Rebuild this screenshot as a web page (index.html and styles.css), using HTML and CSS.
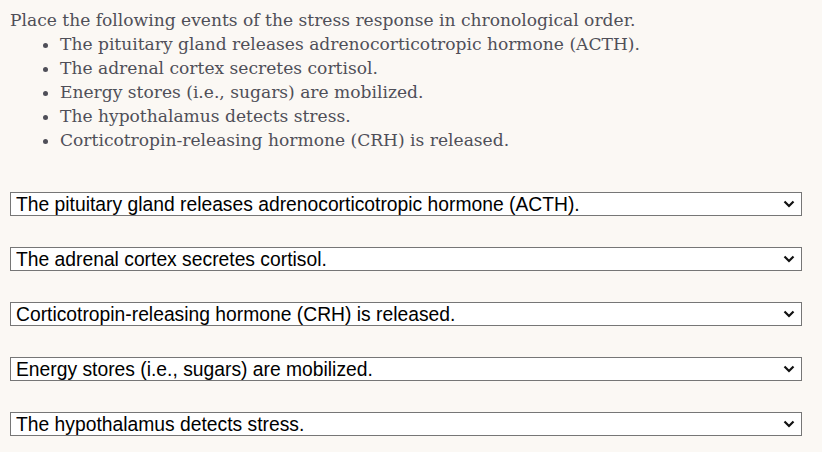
FILE: index.html
```html
<!DOCTYPE html>
<html lang="en">

<head>
  <meta charset="UTF-8" />
  <meta name="viewport" content="width=device-width, initial-scale=1.0" />
  <title>Stress response order</title>
  <link rel="stylesheet" href="styles.css">
</head>

<body>
  <div class="question">
    <div class="prompt">
      Place the following events of the stress response in chronological order.
      <ul class="events">
        <li>The pituitary gland releases adrenocorticotropic hormone (ACTH).</li>
        <li>The adrenal cortex secretes cortisol.</li>
        <li>Energy stores (i.e., sugars) are mobilized.</li>
        <li>The hypothalamus detects stress.</li>
        <li>Corticotropin-releasing hormone (CRH) is released.</li>
      </ul>
    </div>

    <div class="answers">
      <select class="answer">
        <option>The pituitary gland releases adrenocorticotropic hormone (ACTH).</option>
      </select>
      <select class="answer">
        <option>The adrenal cortex secretes cortisol.</option>
      </select>
      <select class="answer">
        <option>Corticotropin-releasing hormone (CRH) is released.</option>
      </select>
      <select class="answer">
        <option>Energy stores (i.e., sugars) are mobilized.</option>
      </select>
      <select class="answer">
        <option>The hypothalamus detects stress.</option>
      </select>
    </div>
  </div>
</body>

</html>
```

FILE: styles.css
```css
* {
  box-sizing: border-box;
}

body {
  margin: 0;
  background: #fbf8f4;
}

.question {
  padding: 8px 20px 0 10px;
}

.prompt {
  font-family: "DejaVu Serif", serif;
  font-size: 17.1px;
  line-height: 24px;
  color: #4f4f58;
}

.events {
  margin: 0;
  padding-left: 50px;
}

.answers {
  display: flex;
  flex-direction: column;
  gap: 31px;
  margin-top: 40px;
}

/* chevron drawn as svg so it looks like the bold windows arrow */
.answer {
  -webkit-appearance: none;
  appearance: none;
  width: 100%;
  height: 24px;
  font-family: "Liberation Sans", Arial, sans-serif;
  font-size: 19.3px;
  color: #000;
  background: #fff url("data:image/svg+xml,%3Csvg xmlns='http://www.w3.org/2000/svg' width='12' height='8' viewBox='0 0 12 8'%3E%3Cpath d='M1.5 1.5 6 6 10.5 1.5' fill='none' stroke='%23111' stroke-width='2.2'/%3E%3C/svg%3E") no-repeat right 6px center;
  border: 1px solid #767676;
  border-radius: 0;
  padding: 0 30px 0 5px;
}
```
